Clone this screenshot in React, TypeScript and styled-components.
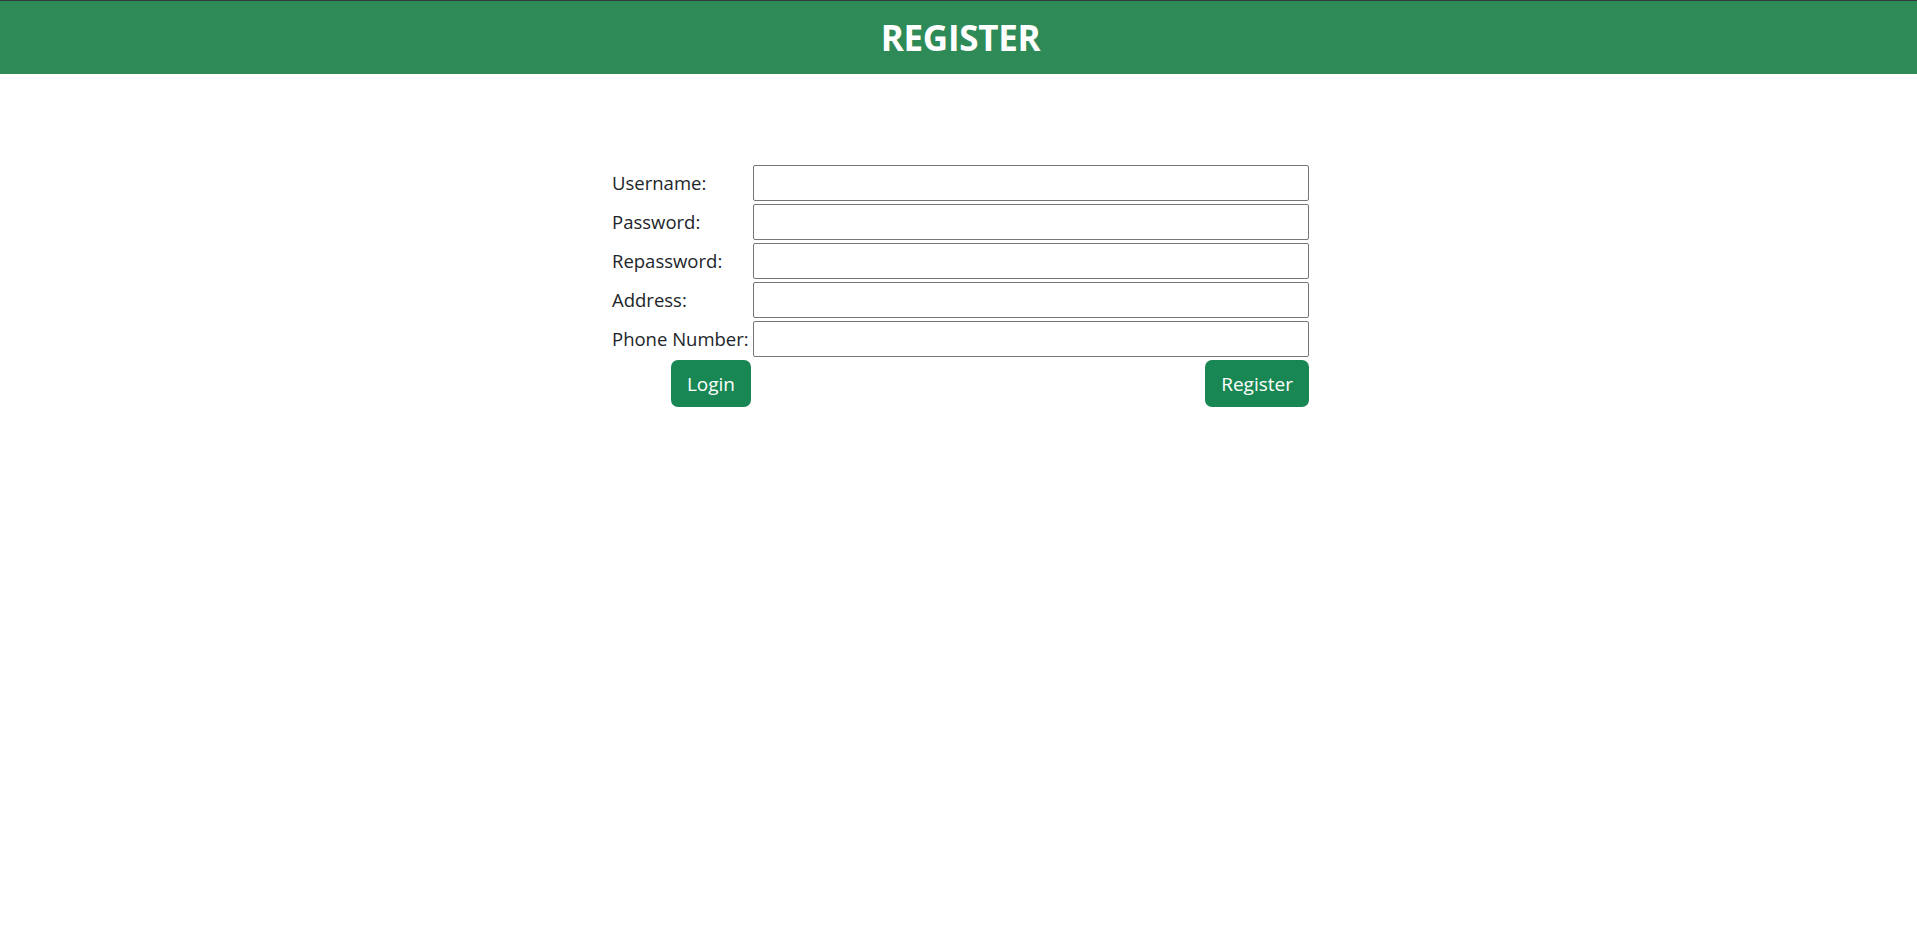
import styled, { createGlobalStyle } from 'styled-components';

const GlobalStyle = createGlobalStyle`
  html, body {
    margin: 0;
    padding: 0;
    background: #ffffff;
    font-family: "Open Sans", "Noto Sans", "Liberation Sans", sans-serif;
    color: #212529;
  }
  * {
    box-sizing: border-box;
  }
`;

const fields = ['Username:', 'Password:', 'Repassword:', 'Address:', 'Phone Number:'];

export default function App() {
  return (
    <>
      <GlobalStyle />
      <Header>
        <Title>REGISTER</Title>
      </Header>
      <Form onSubmit={(e) => e.preventDefault()}>
        {fields.map((label) => (
          <Row key={label}>
            <Label>{label}</Label>
            <Input type={label.includes('assword') ? 'password' : 'text'} />
          </Row>
        ))}
        <Row>
          <Button type="button">Login</Button>
          <Button type="submit">Register</Button>
        </Row>
      </Form>
    </>
  );
}

const Header = styled.header`
  display: flex;
  align-items: center;
  justify-content: center;
  height: 74px;
  padding-left: 4px;
  background-color: #2e8b57;
  border-top: 1px solid #343a40;
`;

const Title = styled.h1`
  margin: 0;
  font-size: 35px;
  font-weight: 700;
  color: #ffffff;
  letter-spacing: -0.3px;
`;

const Form = styled.form`
  display: grid;
  grid-template-columns: 139px 556px;
  column-gap: 2px;
  row-gap: 3px;
  width: fit-content;
  margin: 91px 0 0 612px;
`;

const Row = styled.div`
  display: contents;
`;

const Label = styled.label`
  align-self: center;
  font-size: 18.5px;
  line-height: 24px;
  white-space: nowrap;
  color: #212529;
`;

const Input = styled.input`
  height: 36px;
  width: 100%;
  margin: 0;
  padding: 2px 6px;
  border: 1px solid #767676;
  border-radius: 2px;
  font-size: 18px;
  font-family: inherit;
  outline: none;
`;

const Button = styled.button`
  justify-self: end;
  height: 47px;
  padding: 0 16px;
  border: none;
  border-radius: 7px;
  background-color: #198754;
  color: #ffffff;
  font-family: inherit;
  font-size: 19px;
  cursor: pointer;
`;
